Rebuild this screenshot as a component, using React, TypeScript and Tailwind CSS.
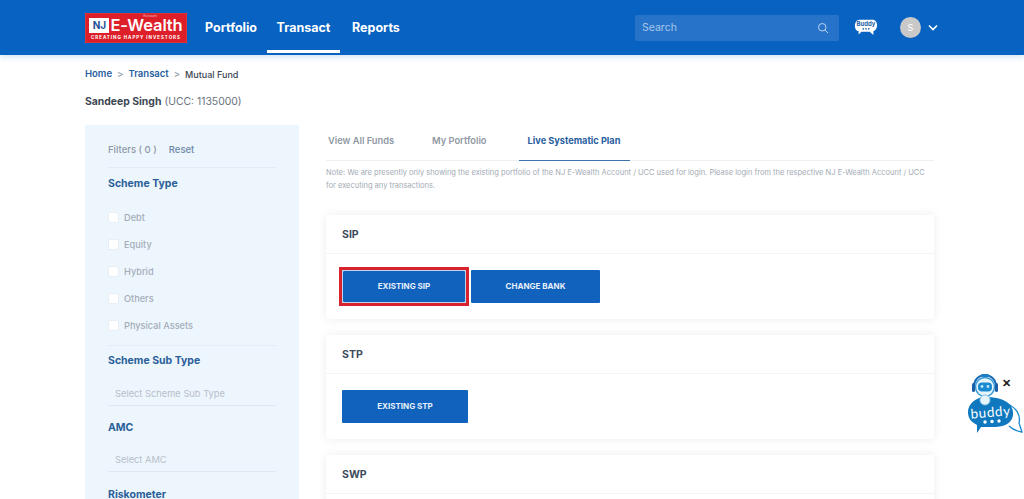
import React from "react";

const NAV = "text-[12.5px] font-bold text-white pt-[1px]";

function BuddySmall() {
  return (
    <svg width="24" height="20" viewBox="0 0 26 20">
      <path d="M6 1h14c3 0 5 2.500 5 6s-2 6-4 6.500v4l-4-3.500H8l-3 3v-3.500C2 13 1 10 1 7.500 1 4 3 1 6 1z" fill="#fff" />
      <text x="13" y="8" fontSize="6.500" fontWeight="700" fill="#1c5fa8" textAnchor="middle" fontFamily="Inter, sans-serif">Buddy</text>
      <circle cx="10" cy="11" r="0.900" fill="#1c5fa8" />
      <circle cx="13" cy="11" r="0.900" fill="#1c5fa8" />
      <circle cx="16" cy="11" r="0.900" fill="#1c5fa8" />
    </svg>
  );
}

function BuddyBot() {
  return (
    <svg width="57" height="62" viewBox="0 0 57 62">
      <path d="M40 30c9 3 14 11 12 19l3 9c-6-1-10-3-13-6" fill="#fff" stroke="#1a8ad0" strokeWidth="1.300" />
      <path d="M7 12a11 11 0 0 1 22 0" fill="none" stroke="#1c6fb4" strokeWidth="2" />
      <circle cx="18" cy="13" r="9.500" fill="#e6f4fc" stroke="#3a9bd8" strokeWidth="1.500" />
      <rect x="11" y="8.500" width="14" height="9" rx="4" fill="#1a8ad0" />
      <circle cx="15" cy="12.500" r="1.400" fill="#bfe6fa" />
      <circle cx="21" cy="12.500" r="1.400" fill="#bfe6fa" />
      <rect x="14" y="0" width="8" height="3" rx="1.500" fill="#1c7fc4" />
      <rect x="5" y="9" width="3" height="9" rx="1.500" fill="#1c5fa8" />
      <rect x="28" y="9" width="3" height="9" rx="1.500" fill="#1c5fa8" />
      <path d="M18 23c12 0 27 3 28 15 1 11-9 15-19 15H14l-4 6 0-8C4 48 1 44 1 38c0-8 8-15 17-15z" fill="#0f78bf" />
      <circle cx="18" cy="26" r="5" fill="#e6f4fc" stroke="#8cc6e8" />
      <text x="24" y="43" fontSize="13.500" fontWeight="400" fill="#fff" textAnchor="middle" fontFamily="Lato, sans-serif" letterSpacing="0.600" transform="rotate(-5 24 43)">buddy</text>
      <circle cx="18" cy="48" r="1.700" fill="#fff" />
      <circle cx="25" cy="47.500" r="1.700" fill="#fff" />
      <circle cx="32" cy="47" r="1.700" fill="#fff" />
    </svg>
  );
}

function Check({ label }: { label: string }) {
  return (
    <div className="flex h-[27px] items-center gap-[5px]">
      <span className="h-[11px] w-[11px] rounded-[2px] border border-[#e8eef5] bg-white" />
      <span className="text-[9.2px] font-medium text-[#a3adb8]">{label}</span>
    </div>
  );
}

function Btn({ label, w, h = "h-[33px]" }: { label: string; w: string; h?: string }) {
  return (
    <button className={`flex ${h} ${w} items-center justify-center rounded-[1px] bg-[#1162bd] pb-[1px] text-[8px] font-bold text-[#e8f0fa]`}>
      {label}
    </button>
  );
}

function Card({ title, children }: { title: string; children: React.ReactNode }) {
  return (
    <section className="rounded-[3px] bg-white shadow-[0_0_10px_rgba(30,50,90,0.09)]">
      <h3 className="flex h-[39px] items-center border-b border-[#f3f4f6] pl-[16px] pt-[1px] text-[10.5px] font-bold text-[#3d4a5c]">{title}</h3>
      <div className="flex items-center px-[16px] py-[16px]">{children}</div>
    </section>
  );
}

export default function App() {
  return (
    <div className="relative h-[499px] w-[1024px] overflow-hidden bg-white font-['Inter',sans-serif]">
      <header className="flex h-[55px] items-center bg-[#0762c1] pl-[85px] pr-[85px] shadow-[0_2px_6px_rgba(7,98,193,0.2)]">
        <div className="relative flex h-[30px] w-[102px] flex-col items-center justify-start border border-[#d8333a] bg-[#dd1f2a] pt-[4px] text-white">
          <span className="absolute left-[57px] top-0 text-[3.5px] leading-[4px] text-[#f3c9cb]">Account</span>
          <div className="flex h-[15px] items-center gap-[1px] leading-[15px]">
            <span className="flex h-[15px] w-[20px] items-center justify-center bg-white text-[10px] font-bold text-[#1f4f96]">NJ</span>
            <span className="text-[16.5px] font-semibold tracking-[-0.1px]">E-Wealth</span>
          </div>
          <span className="mt-[3px] whitespace-nowrap text-[4.500px] font-bold leading-none tracking-[0.95px]">CREATING HAPPY INVESTORS</span>
        </div>
        <nav className="ml-[18px] flex h-full items-center">
          <a className={`${NAV} w-[62px]`}>Portfolio</a>
          <a className={`${NAV} relative flex h-full w-[73px] items-center justify-center`}>
            Transact
            <span className="absolute bottom-[2px] left-0 right-0 h-[3px] bg-white" />
          </a>
          <a className={`${NAV} ml-[12px]`}>Reports</a>
        </nav>
        <div className="ml-auto flex items-center">
          <div className="flex h-[26px] w-[204px] items-center justify-between rounded-[2px] bg-[#2673c9] pl-[7px] pr-[10px]">
            <span className="text-[10.5px] text-[#a6c6ea]">Search</span>
            <svg width="12" height="12" viewBox="0 0 24 24" fill="none" stroke="#c0d6ef" strokeWidth="2"><circle cx="10.500" cy="10.500" r="7.500" /><path d="M16 16l6 6" /></svg>
          </div>
          <span className="ml-[15px] flex"><BuddySmall /></span>
          <span className="ml-[22px] flex h-[21px] w-[21px] items-center justify-center rounded-full bg-[#c9c9c9] text-[9px] text-white">S</span>
          <svg className="ml-[7px] mr-[1px]" width="10" height="7" viewBox="0 0 10 7" fill="none" stroke="#fff" strokeWidth="1.600"><path d="M1 1.500l4 4 4-4" /></svg>
        </div>
      </header>

      <div className="px-[85px]">
        <div className="flex h-[38px] items-center pt-[1px] text-[9.5px] font-semibold">
          <span className="text-[#27609f]">Home</span>
          <span className="mx-[5px] text-[#9aa5b1]">&gt;</span>
          <span className="text-[#27609f]">Transact</span>
          <span className="mx-[5px] text-[#9aa5b1]">&gt;</span>
          <span className="text-[9px] font-medium text-[#3b4452]">Mutual Fund</span>
        </div>
        <p className="flex h-[16px] items-center pt-[1px] text-[10.4px] text-[#6b7480]">
          <b className="mr-[3px] font-bold text-[#3d4753]">Sandeep Singh</b> (UCC: 1135000)
        </p>

        <div className="mt-[16px] flex gap-[27px]">
          <aside className="h-[400px] w-[214px] shrink-0 bg-[#edf5fd] px-[23px]">
            <div className="flex h-[43px] items-center justify-start border-b border-[#e4ecf5] pt-[9px] text-[9.5px] font-medium">
              <span className="text-[#8d98a6]">Filters ( 0 )</span>
              <span className="ml-[12px] text-[#6d87a6]">Reset</span>
            </div>
            <h4 className="mt-[9px] text-[10.5px] font-bold leading-[14px] text-[#2a6099]">Scheme Type</h4>
            <div className="mt-[13px] border-b border-[#e4ecf5] pb-[6px]">
              {["Debt", "Equity", "Hybrid", "Others", "Physical Assets"].map((x) => <Check key={x} label={x} />)}
            </div>
            <h4 className="mt-[8px] text-[10.5px] font-bold leading-[14px] text-[#2a6099]">Scheme Sub Type</h4>
            <div className="mt-[15px] flex h-[23px] items-center border-b border-[#dfe7f0] pl-[7px] text-[9.3px] text-[#b8c0c9]">Select Scheme Sub Type</div>
            <h4 className="mt-[15px] text-[10.5px] font-bold leading-[14px] text-[#2a6099]">AMC</h4>
            <div className="mt-[14px] flex h-[23px] items-center border-b border-[#dfe7f0] pl-[7px] text-[9.3px] text-[#b8c0c9]">Select AMC</div>
            <h4 className="mt-[16px] text-[10.5px] font-bold leading-[14px] text-[#2a6099]">Riskometer</h4>
          </aside>

          <main className="w-[608px] shrink-0">
            <div className="flex h-[36px] border-b border-[#eef0f3] text-[9.3px] font-semibold">
              <span className="flex h-full w-[69px] items-center whitespace-nowrap pb-[4px] pl-[2px] text-[#8f98a3]">View All Funds</span>
              <span className="ml-[37px] flex h-full items-center whitespace-nowrap pb-[4px] text-[#8f98a3]">My Portfolio</span>
              <span className="relative ml-[32px] flex h-full w-[111px] items-center justify-center whitespace-nowrap pb-[4px] text-[9.2px] font-bold text-[#27609f]">
                Live Systematic Plan
                <span className="absolute bottom-[-1px] left-0 right-0 h-[1px] bg-[#3f74ab]" />
              </span>
            </div>
            <p className="mt-[5px] pr-[4px] text-[7.5px] leading-[13px] text-[#a3abb4]">
              Note: We are presently only showing the existing portfolio of the NJ E-Wealth Account / UCC used for login. Please login from the respective NJ E-Wealth Account / UCC for executing any transactions.
            </p>
            <div className="mt-[23px] flex flex-col gap-[16px]">
              <Card title="SIP">
                <div className="-m-[3px] border-[3px] border-[#d8232f]">
                  <div className="border border-[#bcd4ea]"><Btn label="EXISTING SIP" w="w-[122px]" h="h-[31px]" /></div>
                </div>
                <span className="ml-[5px]"><Btn label="CHANGE BANK" w="w-[129px]" /></span>
              </Card>
              <Card title="STP"><Btn label="EXISTING STP" w="w-[126px]" /></Card>
              <Card title="SWP"><Btn label="EXISTING SWP" w="w-[126px]" /></Card>
            </div>
          </main>
        </div>
      </div>

      <div className="absolute left-[967px] top-[374px]"><BuddyBot /></div>
      <span className="absolute left-[1002px] top-[378px] text-[11px] font-bold leading-[11px] text-[#1b1b1b]">✕</span>
    </div>
  );
}
